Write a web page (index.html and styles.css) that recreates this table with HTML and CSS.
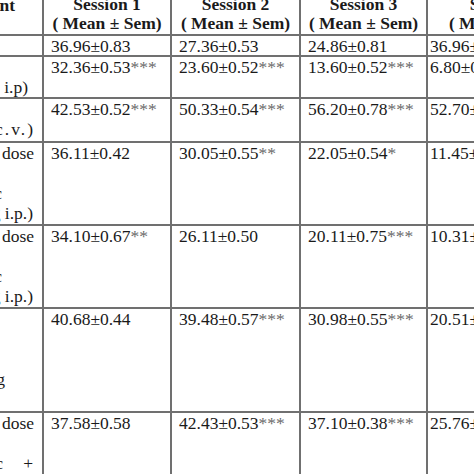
FILE: index.html
```html
<!DOCTYPE html>
<html>
<head>
<meta charset="utf-8">
<link rel="stylesheet" href="styles.css">
</head>
<body>
<div class="sheet">
  <div class="tbl">
    <div class="c h c0"><div class="ln pr27"><b>Treatment</b></div><div class="ln">&nbsp;</div></div>
    <div class="c h"><span>Session 1</span><span>( Mean ± Sem)</span></div>
    <div class="c h"><span>Session 2</span><span>( Mean ± Sem)</span></div>
    <div class="c h"><span>Session 3</span><span>( Mean ± Sem)</span></div>
    <div class="c h"><span>Session 5</span><span>( Mean ± Sem)</span></div>

    <div class="c c0"><div class="ln off">Control</div></div>
    <div class="c">36.96±0.83</div>
    <div class="c">27.36±0.53</div>
    <div class="c">24.86±0.81</div>
    <div class="c c4">36.96±0.83</div>

    <div class="c c0"><div class="ln off">Diazepam</div><div class="ln pr14">(1 mg/kg i.p)</div></div>
    <div class="c">32.36±0.53<i>***</i></div>
    <div class="c">23.60±0.52<i>***</i></div>
    <div class="c">13.60±0.52<i>***</i></div>
    <div class="c c4">6.80±0.37<i>***</i></div>

    <div class="c c0"><div class="ln off">Scopolamine</div><div class="ln pr7 sp">(3 µg i.c.v.)</div></div>
    <div class="c">42.53±0.52<i>***</i></div>
    <div class="c">50.33±0.54<i>***</i></div>
    <div class="c">56.20±0.78<i>***</i></div>
    <div class="c c4">52.70±0.71<i>***</i></div>

    <div class="c c0"><div class="ln pr8">Low dose</div><div class="ln off">extract</div><div class="ln pr40">of plant extrac</div><div class="ln pr9">(100 mg/kg i.p.)</div></div>
    <div class="c">36.11±0.42</div>
    <div class="c">30.05±0.55<i>**</i></div>
    <div class="c">22.05±0.54<i>*</i></div>
    <div class="c c4">11.45±0.49<i>***</i></div>

    <div class="c c0"><div class="ln pr8">High dose</div><div class="ln off">extract</div><div class="ln pr40">of plant extrac</div><div class="ln pr9">(200 mg/kg i.p.)</div></div>
    <div class="c">34.10±0.67<i>**</i></div>
    <div class="c">26.11±0.50</div>
    <div class="c">20.11±0.75<i>***</i></div>
    <div class="c c4">10.31±0.62<i>***</i></div>

    <div class="c c0"><div class="ln off">Scopolamine</div><div class="ln off">+</div><div class="ln off">Piracetam</div><div class="ln pr37">200 mg/kg</div><div class="ln">&nbsp;</div></div>
    <div class="c">40.68±0.44</div>
    <div class="c">39.48±0.57<i>***</i></div>
    <div class="c">30.98±0.55<i>***</i></div>
    <div class="c c4">20.51±0.66<i>***</i></div>

    <div class="c c0"><div class="ln pr8">Low dose</div><div class="ln off">extract</div><div class="ln plus"><span>of plant extrac</span><span class="gap"></span>+</div></div>
    <div class="c">37.58±0.58</div>
    <div class="c">42.43±0.53<i>***</i></div>
    <div class="c">37.10±0.38<i>***</i></div>
    <div class="c c4">25.76±0.58<i>***</i></div>
  </div>
</div>
</body>
</html>
```
FILE: styles.css
```css
html, body {
  margin: 0;
  padding: 0;
  background: #ffffff;
  overflow: hidden;
}

.sheet {
  width: 474px;
  height: 474px;
  overflow: hidden;
}

.tbl {
  display: grid;
  grid-template-columns: 149px 126px 127px 125px 151px;
  grid-template-rows: 44px 19px 40px 42px 81px 81px 102px 80px;
  gap: 2px;
  background: #707070;
  width: max-content;
  margin: -10px 0 0 -107px;
  font-family: "Liberation Serif", "Times New Roman", serif;
  font-size: 17.5px;
  color: #1a1a1a;
}

.c {
  background: #ffffff;
  line-height: 20px;
  padding: 0 0 0 7px;
  white-space: nowrap;
  overflow: hidden;
}

.c i {
  font-style: normal;
  color: #6a6a6a;
}

.c4 {
  padding-left: 2px;
}

.h {
  display: flex;
  flex-direction: column;
  justify-content: flex-end;
  align-items: center;
  padding: 0 0 1px 0;
  line-height: 19px;
  font-weight: bold;
}

.c0 {
  padding: 0;
  text-align: right;
}

.h.c0 {
  align-items: stretch;
}

.ln {
  line-height: 20px;
  height: 20px;
}

.h .ln {
  line-height: 19px;
  height: 19px;
}

.off { padding-right: 60px; }
.pr7 { padding-right: 7px; }
.pr8 { padding-right: 8px; }
.pr9 { padding-right: 9px; }
.pr14 { padding-right: 14px; }
.pr27 { padding-right: 27px; }
.pr37 { padding-right: 37px; }
.pr40 { padding-right: 40px; }

.sp {
  letter-spacing: 2px;
}

.plus {
  padding-right: 9px;
}

.gap {
  display: inline-block;
  width: 20px;
}
```
